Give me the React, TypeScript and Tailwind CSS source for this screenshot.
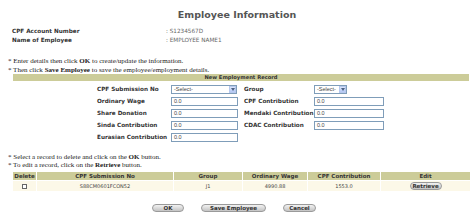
import React from "react";

const sans = "font-['DejaVu_Sans','Verdana',sans-serif]";
const serif = "font-['Liberation_Serif','Times_New_Roman',serif]";
const arial = "font-['Liberation_Sans','Arial',sans-serif]";

function TextBox({ w }: { w: string }) {
  return (
    <div
      className={`${w} h-[9px] border border-[#7f9db9] bg-white flex items-center pl-[2px] text-[5.5px] leading-[7px] text-[#444] ${arial}`}
    >
      0.0
    </div>
  );
}

function SelectBox({ w }: { w: string }) {
  return (
    <div
      className={`${w} h-[9px] border border-[#7f9db9] bg-white flex items-center justify-between pl-[2px] text-[5.5px] leading-[7px] text-[#444] ${arial}`}
    >
      <span>-Select-</span>
      <span className="w-[7px] h-[7px] bg-gradient-to-b from-[#dce6fb] to-[#b4c8f4] border border-[#b6c8ee] flex items-center justify-center">
        <svg width="4" height="3" viewBox="0 0 4 3">
          <path d="M0 0 L4 0 L2 3 Z" fill="#4d6185" />
        </svg>
      </span>
    </div>
  );
}

function Btn({ w, children }: { w: string; children: React.ReactNode }) {
  return (
    <div
      className={`${w} h-[8px] rounded-full border border-[#9a9a9a] bg-gradient-to-b from-[#f2f2f2] to-[#c4c4c4] flex items-center justify-center text-[5.5px] leading-[6px] font-bold text-[#333]`}
    >
      {children}
    </div>
  );
}

export default function App() {
  const lbl = "font-bold text-[#333] text-[5.7px] leading-[12px] whitespace-nowrap";
  const th =
    "bg-[#cccc99] h-[8px] flex items-center justify-center text-[5.5px] leading-[8px] font-bold text-[#333]";
  const td =
    "bg-[#fcf8e8] h-[10px] flex items-center justify-center text-[5px] leading-[8px] text-[#444]";
  return (
    <div className={`w-[474px] h-[221px] bg-white overflow-hidden ${sans}`}>
      <div className="pt-[9px] text-center text-[9.5px] leading-[12px] font-bold text-[#555]">
        Employee Information
      </div>

      <div className="mt-[6px] pl-[12px] grid grid-cols-[154px_1fr] text-[5.7px] leading-[9px]">
        <div className="font-bold text-[#333]">CPF Account Number</div>
        <div className="text-[#666]">: S1234567D</div>
        <div className="font-bold text-[#333]">Name of Employee</div>
        <div className="text-[#666]">: EMPLOYEE NAME1</div>
      </div>

      <div className={`mt-[12px] pl-[8px] text-[7px] leading-[8.5px] text-[#222] ${serif}`}>
        <div>
          * Enter details then click <b>OK</b> to create/update the information.
        </div>
        <div>
          * Then click <b>Save Employee</b> to save the employee/employment details.
        </div>
      </div>

      <div className="ml-[13px] w-[456px] h-[7px] bg-[#cccc99] flex items-center justify-center text-[5.2px] leading-[7px] font-bold text-[#333]">
        New Employment Record
      </div>

      <div className="mt-[2px] ml-[97px] grid grid-cols-[74px_73px_70px_70px] items-center">
        <div className={lbl}>CPF Submission No</div>
        <SelectBox w="w-[66px]" />
        <div className={lbl}>Group</div>
        <SelectBox w="w-[33px]" />

        <div className={lbl}>Ordinary Wage</div>
        <TextBox w="w-[67px]" />
        <div className={lbl}>CPF Contribution</div>
        <TextBox w="w-[70px]" />

        <div className={lbl}>Share Donation</div>
        <TextBox w="w-[67px]" />
        <div className={lbl}>Mendaki Contribution</div>
        <TextBox w="w-[70px]" />

        <div className={lbl}>Sinda Contribution</div>
        <TextBox w="w-[67px]" />
        <div className={lbl}>CDAC Contribution</div>
        <TextBox w="w-[70px]" />

        <div className={lbl}>Eurasian Contribution</div>
        <TextBox w="w-[67px]" />
        <div />
        <div />
      </div>

      <div className={`mt-[10px] pl-[8px] text-[7px] leading-[8px] text-[#222] ${serif}`}>
        <div>
          * Select a record to delete and click on the <b>OK</b> button.
        </div>
        <div>
          * To edit a record, click on the <b>Retrieve</b> button.
        </div>
      </div>

      <div className="mt-[3px] ml-[13px] w-[457px] grid grid-cols-[23px_136px_68px_64px_72px_89px] gap-[1px]">
        <div className={th}>Delete</div>
        <div className={th}>CPF Submission No</div>
        <div className={th}>Group</div>
        <div className={th}>Ordinary Wage</div>
        <div className={th}>CPF Contribution</div>
        <div className={th}>Edit</div>

        <div className={td}>
          <span className="w-[5px] h-[5px] border border-[#666] bg-white" />
        </div>
        <div className={td}>S88CM0601FCON52</div>
        <div className={td}>J1</div>
        <div className={td}>4990.88</div>
        <div className={td}>1553.0</div>
        <div className={td}>
          <Btn w="w-[32px]">Retrieve</Btn>
        </div>
      </div>

      <div className="mt-[13px] ml-[152px] flex gap-[17px]">
        <Btn w="w-[32px]">OK</Btn>
        <Btn w="w-[65px]">Save Employee</Btn>
        <Btn w="w-[33px]">Cancel</Btn>
      </div>
    </div>
  );
}
